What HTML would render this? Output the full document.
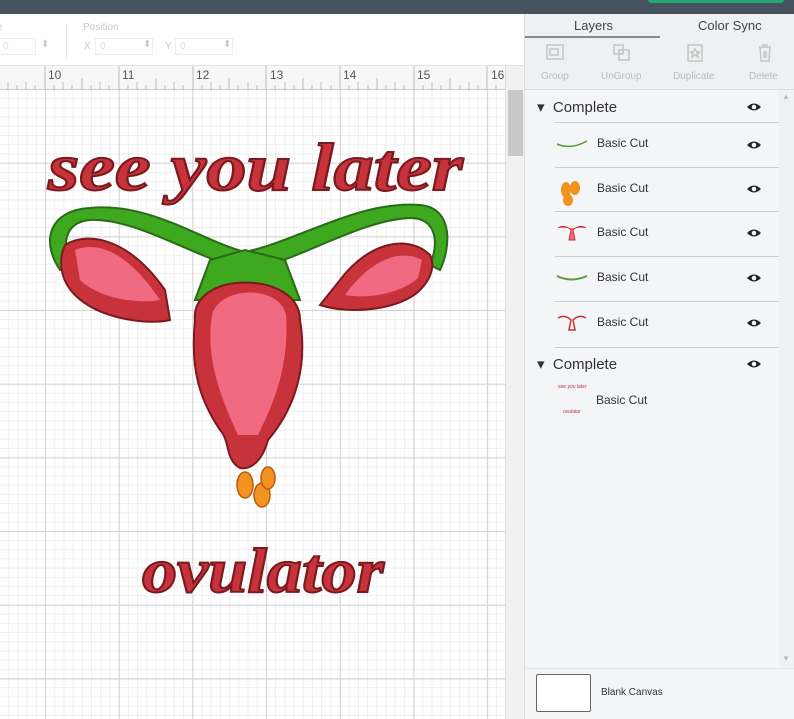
<!DOCTYPE html>
<html><head><meta charset="utf-8"><style>
*{margin:0;padding:0;box-sizing:border-box}
body{width:794px;height:719px;overflow:hidden;background:#fff;font-family:"Liberation Sans",sans-serif;position:relative}
.abs{position:absolute}
.top{left:0;top:0;width:794px;height:14px;background:#47545f}
.btn{left:648px;top:0;width:136px;height:3px;background:#1fa870;border-radius:0 0 4px 4px}
.tool{left:0;top:14px;width:524px;height:52px;background:#fff;border-bottom:1px solid #e3e3e3}
.lbl{color:#c9c9c9;font-size:10px}
.inp{border:1px solid #eee;height:17px;color:#ddd;font-size:10px;padding-left:4px;line-height:15px}
.ruler{left:0;top:66px;width:505px;height:24px;background:#f7f7f7;border-bottom:1px solid #ccc}
.ruler span{position:absolute;top:2px;font-size:12px;color:#555}
.canvas{left:0;top:90px;width:505px;height:629px;
background-color:#fff;
background-image:linear-gradient(#d2d2d2 1px,transparent 1px),linear-gradient(90deg,#d2d2d2 1px,transparent 1px),linear-gradient(#efefef 1px,transparent 1px),linear-gradient(90deg,#efefef 1px,transparent 1px);
background-size:73.7px 73.7px,73.7px 73.7px,9.21px 9.21px,9.21px 9.21px;
background-position:0 -1px,45px 0,0 -1px,45px 0}
.vs{left:505px;top:66px;width:19px;height:653px;background:#f1f1f1;border-left:1px solid #ddd}
.panel{left:524px;top:14px;width:270px;height:705px;background:#f4f5f7;border-left:1px solid #ddd}
.tabs{left:0;top:0;width:270px;height:24px;background:#eef0f2;font-size:13px;color:#444}
.acts{left:0;top:24px;width:270px;height:52px;background:#eef0f2;border-bottom:1px solid #ddd}
.acts span{position:absolute;top:33px;font-size:10px;color:#bbb}
.grp{font-size:15px;color:#333}
.row{left:29px;width:224px;height:45px;border-top:1px solid #ccc}
.row span{position:absolute;left:42px;top:13px;font-size:12px;color:#333}
</style></head><body>
<div class="abs top"></div><div class="abs btn"></div>
<div class="abs tool">
<div class="abs lbl" style="left:-3px;top:8px">e</div>
<div class="abs inp" style="left:-2px;top:24px;width:38px">0</div>
<div class="abs lbl" style="left:41px;top:25px">⬍</div>
<div class="abs" style="left:66px;top:10px;width:1px;height:36px;background:#e5e5e5"></div>
<div class="abs lbl" style="left:83px;top:8px">Position</div>
<div class="abs lbl" style="left:84px;top:27px">X</div>
<div class="abs inp" style="left:95px;top:24px;width:58px">0</div>
<div class="abs lbl" style="left:143px;top:25px">⬍</div>
<div class="abs lbl" style="left:165px;top:27px">Y</div>
<div class="abs inp" style="left:175px;top:24px;width:58px">0</div>
<div class="abs lbl" style="left:223px;top:25px">⬍</div>
</div>
<div class="abs ruler">
<span style="left:48px">10</span><span style="left:122px">11</span><span style="left:196px">12</span><span style="left:270px">13</span><span style="left:343px">14</span><span style="left:417px">15</span><span style="left:491px">16</span>
<svg class="abs" style="left:0;top:0" width="505" height="24"><g stroke="#bbb">
<path d="M45 0V24M119 0V24M193 0V24M266 0V24M340 0V24M414 0V24M487 0V24"/>
<path d="M8 16V24M17 19V24M26 16V24M35 19V24M54 19V24M63 16V24M72 19V24M82 12V24M91 19V24M100 16V24M109 19V24M128 19V24M137 16V24M146 19V24M156 12V24M165 19V24M174 16V24M183 19V24M202 19V24M211 16V24M220 19V24M229 12V24M238 19V24M248 16V24M257 19V24M275 19V24M285 16V24M294 19V24M303 12V24M312 19V24M321 16V24M331 19V24M349 19V24M358 16V24M368 19V24M377 12V24M386 19V24M395 16V24M404 19V24M423 19V24M432 16V24M441 19V24M450 12V24M460 19V24M469 16V24M478 19V24M496 19V24"/></g></svg>
</div>
<div class="abs canvas"></div>
<div class="abs vs"><div class="abs" style="left:2px;top:24px;width:15px;height:66px;background:#c8c8c8"></div></div>
<svg class="abs" style="left:0;top:90px" width="505" height="629">
<text x="48" y="100" font-family="Liberation Serif" font-style="italic" font-weight="bold" font-size="68" fill="#c8323a" stroke="#7a1a1f" stroke-width="2" textLength="415" lengthAdjust="spacingAndGlyphs">see you later</text>
<text x="142" y="502" font-family="Liberation Serif" font-style="italic" font-weight="bold" font-size="64" fill="#c8323a" stroke="#7a1a1f" stroke-width="2" textLength="242" lengthAdjust="spacingAndGlyphs">ovulator</text>
<path d="M60 180 C40 150 50 120 90 118 C150 112 200 150 245 162 C300 150 360 110 420 115 C455 118 450 160 440 180 L430 175 C440 150 435 128 410 128 C360 130 300 170 250 180 C200 172 140 128 90 130 C62 132 62 160 72 175 Z" fill="#3ea81e" stroke="#2a6a18" stroke-width="2"/>
<path d="M195 210 L210 170 L245 160 L285 170 L300 210 Z" fill="#3ea81e" stroke="#2a6a18" stroke-width="2"/>
<path d="M195 230 C190 180 300 180 300 230 C310 290 285 330 268 350 C262 372 250 380 240 378 C225 370 230 350 220 340 C200 310 190 280 195 230 Z" fill="#c8323a" stroke="#7a1a1f" stroke-width="2"/>
<path d="M212 225 C220 195 280 195 286 225 C290 280 270 320 258 345 L238 345 C222 310 205 270 212 225 Z" fill="#f06a82"/>
<path d="M65 155 C90 140 130 150 165 200 L170 230 C150 235 100 230 75 205 C60 190 58 170 65 155 Z" fill="#c8323a" stroke="#7a1a1f" stroke-width="2"/>
<path d="M75 160 C100 150 130 165 160 210 C130 215 95 205 80 190 Z" fill="#f06a82"/>
<path d="M430 165 C410 145 370 150 340 190 L320 215 C350 225 400 220 420 200 C432 188 435 175 430 165 Z" fill="#c8323a" stroke="#7a1a1f" stroke-width="2"/>
<path d="M422 170 C400 158 370 170 345 205 C375 210 405 200 418 188 Z" fill="#f06a82"/>
<g fill="#f3931f" stroke="#b85a10" stroke-width="1.5"><ellipse cx="245" cy="395" rx="8" ry="13"/><ellipse cx="262" cy="405" rx="8" ry="12"/><ellipse cx="268" cy="388" rx="7" ry="11"/></g>
</svg>
<div class="abs panel">
<div class="abs tabs"><span class="abs" style="left:49px;top:4px">Layers</span><span class="abs" style="left:173px;top:4px">Color Sync</span>
<div class="abs" style="left:0;top:22px;width:135px;height:2px;background:#888"></div></div>
<div class="abs acts">
<svg class="abs" style="left:20px;top:5px" width="20" height="20" fill="none" stroke="#c4c4c4" stroke-width="1.5"><rect x="2" y="2" width="16" height="14"/><rect x="5" y="6" width="8" height="6"/></svg>
<svg class="abs" style="left:87px;top:5px" width="20" height="20" fill="none" stroke="#c4c4c4" stroke-width="1.5"><rect x="2" y="2" width="9" height="9"/><rect x="7" y="7" width="10" height="10"/></svg>
<svg class="abs" style="left:161px;top:5px" width="20" height="20" fill="none" stroke="#c4c4c4" stroke-width="1.5"><rect x="2" y="2" width="14" height="16"/><path d="M9 6l1.5 3h3l-2.5 2 1 3-3-2-3 2 1-3-2.5-2h3z"/></svg>
<svg class="abs" style="left:230px;top:5px" width="20" height="20" fill="none" stroke="#c4c4c4" stroke-width="1.5"><path d="M4 4h12M8 4V2h4v2M5 4l1 14h8l1-14M9 8v7M11 8v7"/></svg>
<span style="left:16px">Group</span><span style="left:76px">UnGroup</span><span style="left:148px">Duplicate</span><span style="left:224px">Delete</span>
</div>
<div class="abs grp" style="left:12px;top:84px">▾&nbsp; Complete</div>
<div class="abs" style="left:30px;top:108px">
<div class="abs row" style="left:0;top:0"><svg class="abs" style="left:0;top:13px" width="34" height="14"><path d="M2 8 Q16 14 32 5" stroke="#5b9a3a" stroke-width="1.5" fill="none"/></svg><span>Basic Cut</span></div>
<div class="abs row" style="left:0;top:45px"><svg class="abs" style="left:2px;top:8px" width="28" height="30"><g fill="#f3931f"><ellipse cx="9" cy="14" rx="5" ry="8"/><ellipse cx="18" cy="12" rx="5" ry="7"/><ellipse cx="11" cy="24" rx="5" ry="6"/></g></svg><span>Basic Cut</span></div>
<div class="abs row" style="left:0;top:89px"><svg class="abs" style="left:0;top:10px" width="34" height="22"><path d="M3 6 Q10 2 16 8 L14 18 L20 18 L18 8 Q24 2 31 6" fill="#f06a82" stroke="#c8323a"/></svg><span>Basic Cut</span></div>
<div class="abs row" style="left:0;top:134px"><svg class="abs" style="left:0;top:14px" width="34" height="14"><path d="M2 5 Q16 12 32 5" stroke="#5b9a3a" stroke-width="2" fill="none"/></svg><span>Basic Cut</span></div>
<div class="abs row" style="left:0;top:179px"><svg class="abs" style="left:0;top:10px" width="34" height="22"><path d="M3 6 Q10 2 16 8 L14 18 L20 18 L18 8 Q24 2 31 6" fill="none" stroke="#c8323a" stroke-width="1.5"/></svg><span>Basic Cut</span></div>
<div class="abs" style="left:0;top:225px;width:224px;height:1px;background:#ccc"></div>
</div>
<svg class="abs" style="left:222px;top:88px" width="16" height="260" fill="#222"><g id="e"><path d="M0 5 Q7 -2 14 5 Q7 12 0 5Z"/><circle cx="7" cy="5" r="2.3" fill="#f4f5f7"/></g>
<use href="#e" y="38"/><use href="#e" y="82"/><use href="#e" y="126"/><use href="#e" y="171"/><use href="#e" y="216"/></svg>
<svg class="abs" style="left:222px;top:345px" width="16" height="12" fill="#222"><path d="M0 5 Q7 -2 14 5 Q7 12 0 5Z"/><circle cx="7" cy="5" r="2.3" fill="#f4f5f7"/></svg>
<div class="abs grp" style="left:12px;top:341px">▾&nbsp; Complete</div>
<div class="abs" style="left:33px;top:370px;font-size:5px;color:#c8323a;font-style:italic">see you later</div>
<div class="abs" style="left:38px;top:395px;font-size:5px;color:#c8323a;font-style:italic">ovulator</div>
<div class="abs" style="left:71px;top:379px;font-size:12px;color:#333">Basic Cut</div>
<div class="abs" style="left:254px;top:76px;width:16px;height:578px;background:#f0f1f3"></div>
<div class="abs" style="left:257px;top:78px;font-size:8px;color:#bbb">▲</div>
<div class="abs" style="left:257px;top:640px;font-size:8px;color:#bbb">▼</div>
<div class="abs" style="left:0;top:654px;width:270px;height:51px;background:#f4f5f7;border-top:1px solid #e4e4e4"></div>
<div class="abs" style="left:11px;top:660px;width:55px;height:38px;background:#fff;border:1px solid #666;border-radius:2px"></div>
<div class="abs" style="left:76px;top:673px;font-size:10px;color:#333">Blank Canvas</div>
</div>
</body></html>
